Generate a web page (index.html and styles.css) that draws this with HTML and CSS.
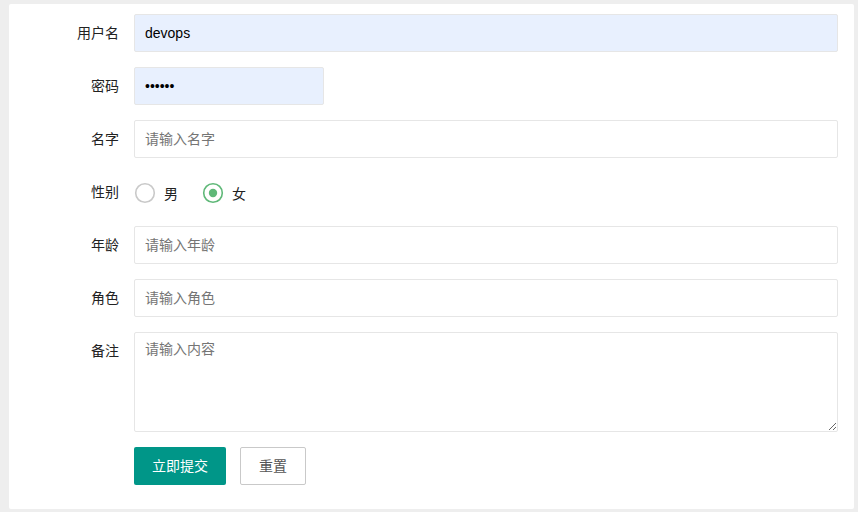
FILE: index.html
```html
<!DOCTYPE html>
<html lang="zh-CN">
<head>
<meta charset="utf-8">
<title>表单</title>
<link rel="stylesheet" href="styles.css">
</head>
<body>
<div class="card">
  <form class="form">
    <div class="form-item">
      <label class="form-label">用户名</label>
      <div class="input-block">
        <input class="input autofill" type="text" value="devops">
      </div>
    </div>
    <div class="form-item">
      <label class="form-label">密码</label>
      <div class="input-inline">
        <input class="input autofill" type="password" value="123456">
      </div>
    </div>
    <div class="form-item">
      <label class="form-label">名字</label>
      <div class="input-block">
        <input class="input" type="text" placeholder="请输入名字">
      </div>
    </div>
    <div class="form-item">
      <label class="form-label">性别</label>
      <div class="input-block radios">
        <div class="radio">
          <svg class="radio-icon" width="22" height="22" viewBox="0 0 22 22"><circle cx="11" cy="11" r="9.3" fill="none" stroke="#c9c9c9" stroke-width="1.6"/></svg>
          <span class="radio-text">男</span>
        </div>
        <div class="radio checked">
          <svg class="radio-icon" width="22" height="22" viewBox="0 0 22 22"><circle cx="11" cy="11" r="9.3" fill="none" stroke="#5fb878" stroke-width="1.6"/><circle cx="11" cy="11" r="4.2" fill="#5fb878"/></svg>
          <span class="radio-text">女</span>
        </div>
      </div>
    </div>
    <div class="form-item">
      <label class="form-label">年龄</label>
      <div class="input-block">
        <input class="input" type="text" placeholder="请输入年龄">
      </div>
    </div>
    <div class="form-item">
      <label class="form-label">角色</label>
      <div class="input-block">
        <input class="input" type="text" placeholder="请输入角色">
      </div>
    </div>
    <div class="form-item">
      <label class="form-label">备注</label>
      <div class="input-block">
        <textarea class="textarea" placeholder="请输入内容"></textarea>
      </div>
    </div>
    <div class="form-item">
      <div class="input-block buttons">
        <button class="btn" type="button">立即提交</button>
        <button class="btn btn-plain" type="reset">重置</button>
      </div>
    </div>
  </form>
</div>
</body>
</html>
```

FILE: styles.css
```css
* { box-sizing: border-box; }
html, body { height: 100%; }
body {
  margin: 0;
  padding: 4px 4px 3px 9px;
  background: #eeeeee;
  font-family: "Liberation Sans", "Noto Sans CJK SC", sans-serif;
  font-size: 14px;
  color: #333;
}
.card {
  background: #fff;
  border-radius: 2px;
  height: 505px;
  padding: 10px 16px 10px 15px;
}
.form-item {
  display: flex;
  align-items: flex-start;
  margin-bottom: 15px;
}
.form-label {
  width: 110px;
  flex: none;
  padding: 9px 15px;
  line-height: 20px;
  text-align: right;
  color: #222;
}
.input-block { flex: 1; min-width: 0; }
.input-inline { width: 190px; flex: none; }
.input, .textarea {
  display: block;
  width: 100%;
  height: 38px;
  border: 1px solid #e6e6e6;
  border-radius: 2px;
  background: #fff;
  padding: 0 10px;
  font-family: inherit;
  font-size: 14px;
  color: #111;
  outline: none;
}
.input.autofill {
  background: #e8f0fe;
  color: #000;
}
.input::placeholder, .textarea::placeholder { color: #757575; }
.textarea {
  height: 100px;
  padding: 6px 10px;
  line-height: 20px;
  resize: both;
}
.radios {
  display: flex;
  align-items: center;
  padding-top: 6px;
}
.radio {
  display: flex;
  align-items: center;
  height: 28px;
  margin-right: 14px;
  padding-right: 10px;
}
.radio-icon { display: block; margin-right: 8px; }
.radio-text { font-size: 14px; color: #222; }
.buttons {
  display: flex;
  margin-left: 110px;
  gap: 14px;
}
.btn {
  height: 38px;
  line-height: 38px;
  padding: 0 18px;
  border: none;
  border-radius: 2px;
  background: #009688;
  color: #fff;
  font-family: inherit;
  font-size: 14px;
}
.btn-plain {
  background: #fff;
  border: 1px solid #c9c9c9;
  color: #555;
  line-height: 36px;
}
```
